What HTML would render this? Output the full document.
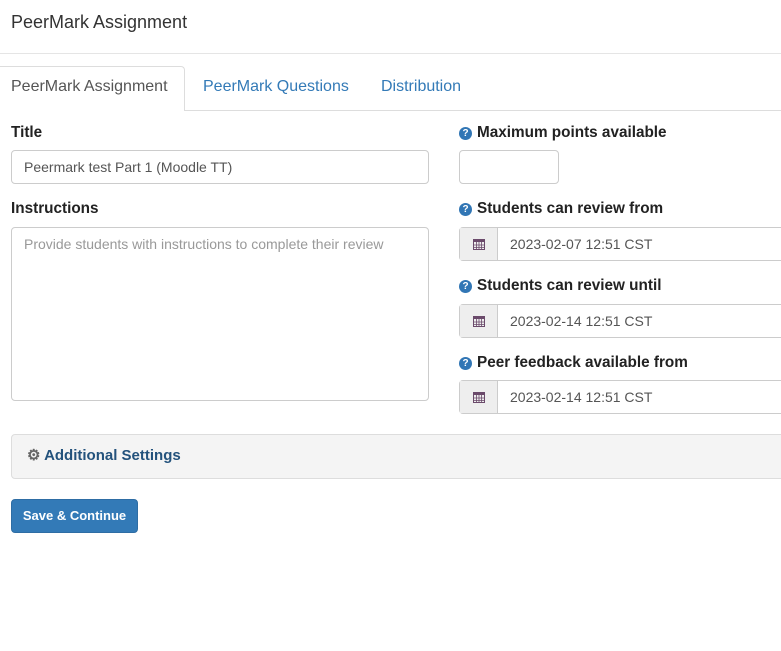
<!DOCTYPE html>
<html><head><style>
*{box-sizing:border-box;margin:0;padding:0}
body{width:781px;height:651px;background:#fff;font-family:"Liberation Sans",Arial,sans-serif;color:#333;position:relative;overflow:hidden}
.a{position:absolute;white-space:nowrap}
.lbl{font-weight:bold;font-size:15.3px;color:#222}
.inp{position:absolute;border:1px solid #ccc;border-radius:4px;background:#fff;font-size:14px;color:#555}
.q{display:inline-block;width:13px;height:13px;border-radius:50%;background:#3176b5;color:#fff;font-size:10px;line-height:13px;text-align:center;vertical-align:1px;margin-right:5px;font-weight:bold}
.date{position:absolute;left:459px;width:330px;height:34px;border:1px solid #ccc;border-radius:4px 0 0 4px;background:#fff}
.date .ad{position:absolute;left:0;top:0;width:38px;height:32px;background:#eee;border-right:1px solid #ccc}
.date .t{position:absolute;left:50px;top:8px;font-size:14px;color:#555}
</style></head><body>
<div class="a" style="left:11px;top:12px;font-size:18px;color:#333">PeerMark Assignment</div>
<div class="a" style="left:0;top:53px;width:781px;height:1px;background:#e5e5e5"></div>
<div class="a" style="left:0;top:110px;width:781px;height:1px;background:#ddd"></div>
<div class="a" style="left:0;top:66px;width:185px;height:45px;border:1px solid #ddd;border-bottom:none;border-left:none;border-radius:0 4px 0 0;background:#fff"></div>
<div class="a" style="left:11px;top:78px;font-size:16px;color:#555">PeerMark Assignment</div>
<div class="a" style="left:203px;top:78px;font-size:16px;color:#337ab7">PeerMark Questions</div>
<div class="a" style="left:381px;top:78px;font-size:16px;color:#337ab7">Distribution</div>

<div class="a lbl" style="left:11px;top:124px">Title</div>
<div class="inp" style="left:11px;top:150px;width:418px;height:34px;padding:8px 12px">Peermark test Part 1 (Moodle TT)</div>
<div class="a lbl" style="left:11px;top:200px">Instructions</div>
<div class="inp" style="left:11px;top:227px;width:418px;height:174px;padding:8px 12px;color:#999">Provide students with instructions to complete their review</div>

<div class="a lbl" style="left:459px;top:124px"><span class="q">?</span>Maximum points available</div>
<div class="inp" style="left:459px;top:150px;width:100px;height:34px"></div>
<div class="a lbl" style="left:459px;top:200px"><span class="q">?</span>Students can review from</div>
<div class="date" style="top:227px"><div class="ad"><svg style="position:absolute;left:13px;top:10px" width="12" height="12" viewBox="0 0 12 12"><rect x="0.5" y="1.5" width="11" height="10" fill="none" stroke="#6b4a6b"/><rect x="0" y="1" width="12" height="3" fill="#6b4a6b"/><path d="M0 7h12M0 9.5h12M3.5 4v8M6 4v8M8.5 4v8" stroke="#6b4a6b" stroke-width="0.8"/></svg></div><div class="t">2023-02-07 12:51 CST</div></div>
<div class="a lbl" style="left:459px;top:277px"><span class="q">?</span>Students can review until</div>
<div class="date" style="top:304px"><div class="ad"><svg style="position:absolute;left:13px;top:10px" width="12" height="12" viewBox="0 0 12 12"><rect x="0.5" y="1.5" width="11" height="10" fill="none" stroke="#6b4a6b"/><rect x="0" y="1" width="12" height="3" fill="#6b4a6b"/><path d="M0 7h12M0 9.5h12M3.5 4v8M6 4v8M8.5 4v8" stroke="#6b4a6b" stroke-width="0.8"/></svg></div><div class="t">2023-02-14 12:51 CST</div></div>
<div class="a lbl" style="left:459px;top:354px"><span class="q">?</span>Peer feedback available from</div>
<div class="date" style="top:380px"><div class="ad"><svg style="position:absolute;left:13px;top:10px" width="12" height="12" viewBox="0 0 12 12"><rect x="0.5" y="1.5" width="11" height="10" fill="none" stroke="#6b4a6b"/><rect x="0" y="1" width="12" height="3" fill="#6b4a6b"/><path d="M0 7h12M0 9.5h12M3.5 4v8M6 4v8M8.5 4v8" stroke="#6b4a6b" stroke-width="0.8"/></svg></div><div class="t">2023-02-14 12:51 CST</div></div>

<div class="a" style="left:11px;top:434px;width:780px;height:45px;background:#f4f4f4;border:1px solid #ddd;border-radius:4px"></div>
<div class="a" style="left:27px;top:446px;font-size:15px;font-weight:bold;color:#23527c"><span style="color:#666;font-size:15px">&#9881;</span> Additional Settings</div>
<div class="a" style="left:11px;top:499px;width:127px;height:34px;background:#337ab7;border:1px solid #2e6da4;border-radius:4px;color:#fff;font-size:13px;font-weight:bold;text-align:center;line-height:32px">Save &amp; Continue</div>
</body></html>
